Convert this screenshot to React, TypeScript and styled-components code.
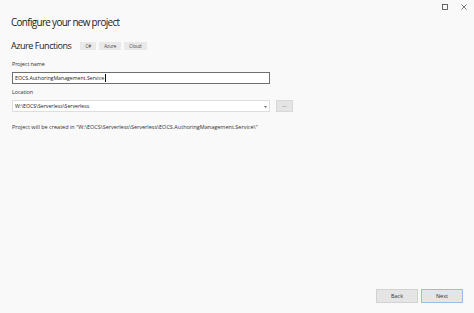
import React from "react";
import styled, { createGlobalStyle } from "styled-components";

const Global = createGlobalStyle`
  html, body { margin: 0; padding: 0; background: #f9f9f9; }
  * { box-sizing: border-box; }
`;

const Window = styled.div`
  width: 474px;
  height: 313px;
  display: flex;
  flex-direction: column;
  background: #f9f9f9;
  font-family: "Open Sans", "Noto Sans", sans-serif;
  color: #1e1e1e;
  overflow: hidden;
`;

const TitleBar = styled.div`
  display: flex;
  justify-content: flex-end;
  align-items: center;
  height: 13px;
  padding-right: 2px;
  gap: 2px;
`;

const WinButton = styled.div`
  width: 17px;
  height: 13px;
  display: flex;
  align-items: center;
  justify-content: center;
`;

const Content = styled.div`
  display: flex;
  flex-direction: column;
  padding: 0 12px 0 11px;
  flex: 1;
`;

const Heading = styled.h1`
  margin: 2px 0 0 0;
  font-weight: 400;
  font-size: 9.9px;
  line-height: 14px;
  height: 14px;
  letter-spacing: -0.65px;
  color: #1b1b1b;
`;

const TemplateRow = styled.div`
  display: flex;
  align-items: center;
  height: 11px;
  margin-top: 11px;
  gap: 3px;
`;

const TemplateName = styled.span`
  font-size: 9px;
  line-height: 11px;
  letter-spacing: -0.45px;
  margin-right: 6px;
  color: #1b1b1b;
`;

const Tag = styled.span`
  background: #e9e9e9;
  font-size: 4.5px;
  line-height: 8px;
  height: 8px;
  padding: 0 5px;
  color: #444;
  display: inline-block;
`;

const Label = styled.div<{ $top: number }>`
  font-size: 5.5px;
  line-height: 8px;
  height: 8px;
  letter-spacing: -0.1px;
  margin-left: 1px;
  margin-top: ${(p) => p.$top}px;
  color: #333;
`;

const Input = styled.div<{ $focused?: boolean }>`
  width: 258px;
  height: 12px;
  margin-top: 4px;
  margin-left: 1px;
  background: #fff;
  border: 1px solid ${(p) => (p.$focused ? "#6f6f6f" : "#dedede")};
  font-size: 5.2px;
  line-height: 10px;
  padding-left: 2px;
  display: flex;
  align-items: center;
  position: relative;
  color: #222;
`;

const Caret = styled.span`
  display: inline-block;
  width: 1px;
  height: 8px;
  margin-left: 0.5px;
  background: #000;
`;

const Arrow = styled.svg`
  position: absolute;
  right: 2px;
  top: 5px;
`;

const LocationRow = styled.div`
  display: flex;
  align-items: flex-end;
  gap: 6px;
`;

const BrowseButton = styled.div`
  width: 17px;
  height: 12px;
  background: #e4e4e4;
  border: 1px solid #d8d8d8;
  font-size: 5px;
  line-height: 8px;
  display: flex;
  justify-content: center;
  color: #444;
`;

const Note = styled.div`
  font-size: 5.5px;
  line-height: 8px;
  margin-top: 11px;
  margin-left: 1px;
  color: #333;
`;

const Footer = styled.div`
  margin-top: auto;
  display: flex;
  justify-content: flex-end;
  gap: 3px;
  padding: 0 11px 10px 0;
`;

const Button = styled.div<{ $primary?: boolean }>`
  width: 42px;
  height: 14px;
  background: #e5e5e5;
  border: 1px solid ${(p) => (p.$primary ? "#98bde9" : "#d2d2d2")};
  font-size: 5.5px;
  display: flex;
  align-items: center;
  justify-content: center;
  color: #333;
`;

export default function App() {
  return (
    <>
      <Global />
      <Window>
        <TitleBar>
          <WinButton>
            <svg width="6" height="6" viewBox="0 0 6 6">
              <rect x="0.5" y="0.5" width="5" height="5" fill="none" stroke="#444" strokeWidth="0.8" />
            </svg>
          </WinButton>
          <WinButton>
            <svg width="6" height="6" viewBox="0 0 6 6">
              <path d="M0.5 0.5 L5.5 5.5 M5.5 0.5 L0.5 5.5" stroke="#444" strokeWidth="0.7" />
            </svg>
          </WinButton>
        </TitleBar>
        <Content>
          <Heading>Configure your new project</Heading>
          <TemplateRow>
            <TemplateName>Azure Functions</TemplateName>
            <Tag>C#</Tag>
            <Tag>Azure</Tag>
            <Tag>Cloud</Tag>
          </TemplateRow>
          <Label $top={9}>Project name</Label>
          <Input $focused>
            EOCS.AuthoringManagement.Service
            <Caret />
          </Input>
          <Label $top={4}>Location</Label>
          <LocationRow>
            <Input>
              W:\EOCS\Serverless\Serverless
              <Arrow width="3" height="2" viewBox="0 0 3 2">
                <path d="M0 0 L3 0 L1.5 2 Z" fill="#666" />
              </Arrow>
            </Input>
            <BrowseButton>...</BrowseButton>
          </LocationRow>
          <Note>
            Project will be created in "W:\EOCS\Serverless\Serverless\EOCS.AuthoringManagement.Service\"
          </Note>
        </Content>
        <Footer>
          <Button>Back</Button>
          <Button $primary>Next</Button>
        </Footer>
      </Window>
    </>
  );
}
